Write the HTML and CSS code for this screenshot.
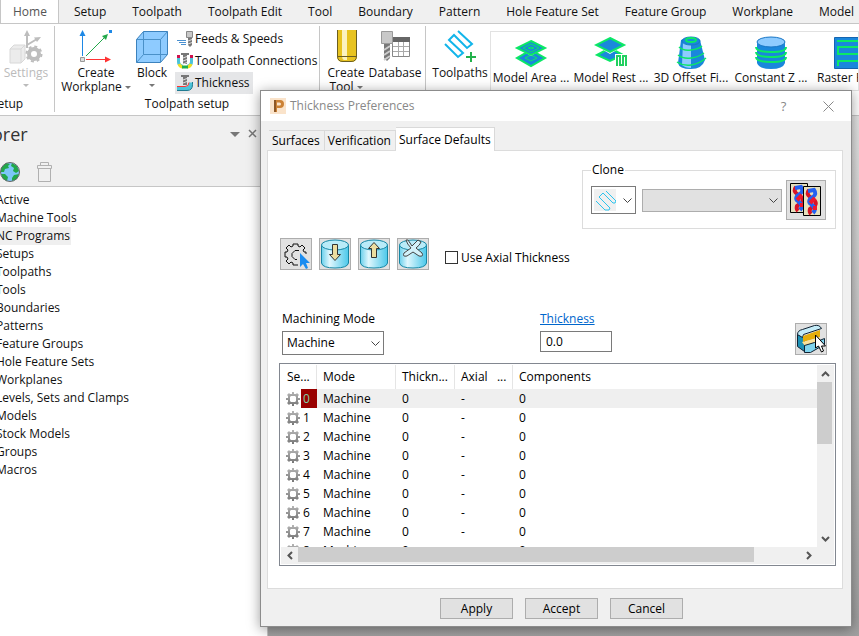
FILE: index.html
```html
<!DOCTYPE html>
<html lang="en">
<head>
    <meta charset="UTF-8">
    <meta name="viewport" content="width=device-width, initial-scale=1.0">
    <title>Thickness Preferences</title>
    <link rel="stylesheet" href="styles.css">
</head>
<body>
    <nav class="ribbon-tabs">
        <button class="ribbon-tab active">Home</button>
        <button class="ribbon-tab">Setup</button>
        <button class="ribbon-tab">Toolpath</button>
        <button class="ribbon-tab">Toolpath Edit</button>
        <button class="ribbon-tab">Tool</button>
        <button class="ribbon-tab">Boundary</button>
        <button class="ribbon-tab">Pattern</button>
        <button class="ribbon-tab">Hole Feature Set</button>
        <button class="ribbon-tab">Feature Group</button>
        <button class="ribbon-tab">Workplane</button>
        <button class="ribbon-tab">Model</button>
    </nav>

    <div class="ribbon">
        <section class="group group-settings">
            <div class="group-tools">
                <button class="tool" disabled>
                    <svg width="34" height="34" viewBox="0 0 34 34">
                        <path d="M1 19l4-4h11v14l-4 4H1z" fill="#ececec" stroke="#d8d8d8"/>
                        <path d="M1 19h11v14M12 19l4-4" fill="none" stroke="#d8d8d8"/>
                        <path d="M18 18V4M18 15l10-6" stroke="#bdbdbd" stroke-width="2" fill="none"/>
                        <path d="M18 0l3 6h-6zM32 7l-7 .5 3 4.500z" fill="#bdbdbd"/>
                        <circle cx="25" cy="24" r="5" fill="none" stroke="#bdbdbd" stroke-width="4"/>
                        <circle cx="25" cy="24" r="7.500" fill="none" stroke="#bdbdbd" stroke-width="2" stroke-dasharray="3 2.900"/>
                    </svg>
                    <span>Settings</span>
                    <i class="arrow"></i>
                </button>
            </div>
            <h2>Setup</h2>
        </section>

        <section class="group group-toolpath">
            <div class="group-tools">
                <button class="tool tool-workplane">
                    <svg width="34" height="34" viewBox="0 0 34 34">
                        <path d="M3.500 26V5" stroke="#1e88e5" fill="none"/>
                        <path d="M3.500 0l3 6h-6z" fill="#1e88e5"/>
                        <path d="M7 29.500h20" stroke="#f33" fill="none"/>
                        <path d="M32 29.500l-6-3v6z" fill="#f33"/>
                        <path d="M7 26L26 7" stroke="#22a84a" fill="none"/>
                        <path d="M29 4l-6 2 4 4z" fill="#22a84a"/>
                        <path d="M30 0h3v3h-3z" fill="#1e88e5"/>
                        <path d="M1.500 27.500h4v4h-4z" fill="#ddd" stroke="#999"/>
                    </svg>
                    <span>Create<br>Workplane <i class="arrow"></i></span>
                </button>
                <button class="tool tool-block">
                    <svg width="34" height="34" viewBox="0 0 34 34">
                        <path d="M1.500 9.500l7-8h24v23l-7 8h-24z" fill="#8ecbff" stroke="#3c82bd"/>
                        <path d="M1.500 9.500h24l7-8M25.500 9.500v23M8.500 1.500v23h24M8.500 24.500l-7 8" fill="none" stroke="#4a90c8"/>
                    </svg>
                    <span>Block</span>
                    <i class="arrow"></i>
                </button>
                <div class="small-tools">
                    <button class="small-tool">
                        <svg width="16" height="16" viewBox="0 0 16 16">
                            <path d="M9.500.500h6v6h-6z" fill="#c8c8c8" stroke="#888"/>
                            <path d="M11 7h4v7l-2 2-2-2z" fill="#777"/>
                            <path d="M11 10l4-1.500M11 13l4-1.500" stroke="#ddd"/>
                            <path d="M0 9.500h9M2 11.500h7M4 13.500h5" stroke="#4a90d0" fill="none"/>
                        </svg>
                        Feeds &amp; Speeds
                    </button>
                    <button class="small-tool">
                        <svg width="16" height="16" viewBox="0 0 16 16">
                            <path d="M1.500 5v4q0 3 4 4.500M14.500 5v4q0 3-4 4.500" fill="none" stroke="#4cc3d9" stroke-width="3"/>
                            <path d="M2 11q1 3 4 3M14 11q-1 3-4 3" fill="none" stroke="#f0e020" stroke-width="3"/>
                            <path d="M5 12.500h6v3H5z" fill="#21b04b"/>
                            <path d="M0 2h3v3H0zM13 2h3v3h-3z" fill="#d0104c"/>
                            <path d="M4 0h8v2h-2v9H6V2H4z" fill="#777"/>
                            <path d="M6 5l4-1.500M6 8l4-1.500M6 11l4-1.500" stroke="#ddd"/>
                        </svg>
                        Toolpath Connections
                    </button>
                    <button class="small-tool selected">
                        <svg width="16" height="16" viewBox="0 0 16 16">
                            <path d="M0 13.500h9q5 0 5-6" fill="none" stroke="#4cc3d9" stroke-width="4"/>
                            <path d="M0 15.500h10q5.500 0 5.500-6V7" fill="none" stroke="#207a90"/>
                            <path d="M0 11.500h8q4 0 4-4" fill="none" stroke="#f33"/>
                            <path d="M4 0h8v2h-2v8H6V2H4z" fill="#777"/>
                            <path d="M6 5l4-1.500M6 8l4-1.500" stroke="#ddd"/>
                        </svg>
                        Thickness
                    </button>
                </div>
            </div>
            <h2>Toolpath setup</h2>
        </section>

        <section class="group group-tool">
            <div class="group-tools">
                <button class="tool tool-create">
                    <svg width="34" height="34" viewBox="0 0 34 34">
                        <path d="M8 0v26q0 6 6 6h8q6 0 6-6V0z" fill="#e8c320"/>
                        <path d="M13 0h5v30h-3q-2-1-2-4z" fill="#fbf2c0"/>
                        <path d="M8.500 0v26q0 5.500 5.500 5.500h8q5.500 0 5.500-5.500V0M9 26.500h19" fill="none" stroke="#6b5e20"/>
                    </svg>
                    <span>Create<br>Tool <i class="arrow"></i></span>
                </button>
                <button class="tool tool-database">
                    <svg width="34" height="34" viewBox="0 0 34 34">
                        <path d="M14.500 7.500h17v19h-17z" fill="#fff" stroke="#888"/>
                        <path d="M14 7h18v5H14z" fill="#666"/>
                        <path d="M15 16.500h16M15 21.500h16M20.500 12v14M25.500 12v14" stroke="#aaa" fill="none"/>
                        <path d="M3.500 1.500h11v12h-11z" fill="#c8c8c8" stroke="#999"/>
                        <path d="M6 14h6v14l-3 3-3-3z" fill="#777"/>
                        <path d="M6 20l6-4M6 25l6-4M6 30l6-4" stroke="#ccc" stroke-width="2"/>
                    </svg>
                    <span>Database</span>
                </button>
            </div>
        </section>

        <section class="group group-gallery">
            <div class="group-tools">
                <button class="tool tool-toolpaths">
                    <svg width="34" height="34" viewBox="0 0 34 34">
                        <path d="M2 14l13 13 5-4L6 10l5-5 13 13 5-4L15 1" fill="none" stroke="#12b5ea" stroke-width="2"/>
                        <path d="M28 22v10M23 27h10" stroke="#22b14c" stroke-width="2" fill="none"/>
                    </svg>
                    <span>Toolpaths</span>
                </button>
                <div class="gallery">
                    <button class="gallery-item">
                        <svg width="34" height="34" viewBox="0 0 34 34">
                            <path d="M17 14l14 8-14 8-14-8z" fill="#1a87dc" stroke="#0be866" stroke-width="2"/>
                            <path d="M17 19l6 3-6 3-6-3z" fill="none" stroke="#0be866"/>
                            <path d="M17 3l15 8-15 9-15-9z" fill="#fff"/>
                            <path d="M17 5l14 7-14 7-14-7z" fill="#1a87dc" stroke="#0be866" stroke-width="2"/>
                            <path d="M17 8l8 4-8 4-8-4zM17 11l3 1-3 1-3-1z" fill="none" stroke="#0be866"/>
                        </svg>
                        Model Area ...
                    </button>
                    <button class="gallery-item">
                        <svg width="34" height="34" viewBox="0 0 34 34">
                            <path d="M16 12l13 7-13 6-13-6z" fill="#1a87dc" stroke="#0be866" stroke-width="2"/>
                            <path d="M16 1l15 8-15 9-15-9z" fill="#fff"/>
                            <path d="M16 2l14 7-14 7-14-7z" fill="#1a87dc" stroke="#0be866" stroke-width="2"/>
                            <path d="M21 18h12v12H21z" fill="#fff"/>
                            <path d="M23 30V20h3v9h3v-9h3v10" fill="none" stroke="#22d060" stroke-width="2"/>
                        </svg>
                        Model Rest ...
                    </button>
                    <button class="gallery-item">
                        <svg width="34" height="34" viewBox="0 0 34 34">
                            <path d="M7 4q9-5 19 0l5 20q-3 9-14 9-12 0-13-6z" fill="#1a87dc"/>
                            <path d="M9 6h8v26q-6 0-9-3z" fill="#8ecbff"/>
                            <ellipse cx="17" cy="5" rx="9" ry="4" fill="#1a87dc" stroke="#1976c5"/>
                            <ellipse cx="17" cy="4" rx="5" ry="2" fill="none" stroke="#0be866" stroke-width="2"/>
                            <path d="M5 11q4 4 12 3t11-4M4 19q5 4 13 3t13-5M3 26q6 4 14 3t15-7" fill="none" stroke="#0be866" stroke-width="1.500"/>
                        </svg>
                        3D Offset Fi...
                    </button>
                    <button class="gallery-item">
                        <svg width="34" height="34" viewBox="0 0 34 34">
                            <path d="M3 6v21q2 6 14 6t14-6V6z" fill="#1a87dc"/>
                            <ellipse cx="17" cy="6" rx="14" ry="5" fill="#8ecbff" stroke="#1976c5"/>
                            <path d="M2 11q0 5 15 5t15-5M2 16q0 5 15 5t15-5M2 21q0 5 15 5t15-5" fill="none" stroke="#0be866" stroke-width="2"/>
                        </svg>
                        Constant Z ...
                    </button>
                    <button class="gallery-item">
                        <svg width="34" height="34" viewBox="0 0 34 34">
                            <path d="M.500 1.500h33v31H.500z" fill="#1a87dc" stroke="#1565b0"/>
                            <path d="M3 5h28v6H4v7h27v7H4v5" fill="none" stroke="#0be866" stroke-width="2"/>
                        </svg>
                        Raster Fini...
                    </button>
                </div>
            </div>
        </section>
    </div>

    <main class="workspace">
        <aside class="explorer">
            <header class="explorer-header">
                <h1>Explorer</h1>
                <button class="icon-button" aria-label="Panel menu"><i class="arrow large"></i></button>
                <button class="icon-button" aria-label="Close panel">
                    <svg width="9" height="9" viewBox="0 0 9 9"><path d="M1 1l7 7M8 1L1 8" stroke="#777" stroke-width="1.500"/></svg>
                </button>
            </header>
            <div class="explorer-tools">
                <button class="icon-button" aria-label="World">
                    <svg width="20" height="20" viewBox="0 0 20 20">
                        <circle cx="10" cy="10" r="9.500" fill="#7cc6f8"/>
                        <path d="M1 6l5-5 4 1-2 2 1 2-4 1-1 3-3 0zM12 1l5 3 2 5-3 2-3-2 1-3-3-2zM1 12l4 0 3 3-1 4-4-2zM14 13l5-1-2 5-5 2 0-3z" fill="#21a84a"/>
                        <circle cx="10" cy="10" r="9.500" fill="none" stroke="#666"/>
                    </svg>
                </button>
                <button class="icon-button" aria-label="Delete">
                    <svg width="16" height="20" viewBox="0 0 16 20">
                        <path d="M1.500 6.500h12v13h-12zM.500 3.500h14v3H.500zM3.500.500h8v3h-8z" fill="none" stroke="#b0b0b0"/>
                    </svg>
                </button>
            </div>
            <ul class="tree">
                <li><span>Active</span></li>
                <li><span>Machine Tools</span></li>
                <li><span class="selected">NC Programs</span></li>
                <li><span>Setups</span></li>
                <li><span>Toolpaths</span></li>
                <li><span>Tools</span></li>
                <li><span>Boundaries</span></li>
                <li><span>Patterns</span></li>
                <li><span>Feature Groups</span></li>
                <li><span>Hole Feature Sets</span></li>
                <li><span>Workplanes</span></li>
                <li><span>Levels, Sets and Clamps</span></li>
                <li><span>Models</span></li>
                <li><span>Stock Models</span></li>
                <li><span>Groups</span></li>
                <li><span>Macros</span></li>
            </ul>
        </aside>
        <div class="viewport"></div>
    </main>

    <div class="dialog" role="dialog" aria-labelledby="dialog-title">
        <header class="dialog-title">
            <svg width="16" height="16" viewBox="0 0 16 16">
                <path d="M0 0h16v16H0z" fill="#fae3ca"/>
                <path d="M4 2h6q4 0 4 4t-4 4H7v4H4zM7 4.500v3h2.500q1.500 0 1.500-1.500T9.500 4.500z" fill="#cc8235" fill-rule="evenodd"/>
                <path d="M4 2h2v12H4z" fill="#8d5725"/>
            </svg>
            <h2 id="dialog-title">Thickness Preferences</h2>
            <button class="title-button" aria-label="Help">?</button>
            <button class="title-button" aria-label="Close">
                <svg width="11" height="11" viewBox="0 0 11 11"><path d="M.500.500l10 10M10.500.500l-10 10" stroke="#888"/></svg>
            </button>
        </header>

        <div class="dialog-tabs">
            <button class="dialog-tab">Surfaces</button>
            <button class="dialog-tab">Verification</button>
            <button class="dialog-tab active">Surface Defaults</button>
        </div>

        <div class="panel">
            <fieldset class="clone">
                <legend>Clone</legend>
                <div class="select select-type">
                    <select aria-label="Clone type"><option></option></select>
                    <svg class="type-icon" width="22" height="22" viewBox="0 0 22 22">
                        <path d="M0 0h22v22H0z" fill="#f0f0f0"/>
                        <path d="M2 12l9 9h4l1-2L5 8l4-4 10 10h2l1-2L12 2" fill="none" stroke="#2cc4ee"/>
                    </svg>
                    <svg class="chevron" width="9" height="5" viewBox="0 0 9 5"><path d="M.500.500l4 4 4-4" fill="none" stroke="#444"/></svg>
                </div>
                <div class="select select-source">
                    <select aria-label="Clone source" disabled><option></option></select>
                    <svg class="chevron" width="9" height="5" viewBox="0 0 9 5"><path d="M.500.500l4 4 4-4" fill="none" stroke="#444"/></svg>
                </div>
                <button class="square-button large" aria-label="Copy thickness">
                    <svg width="32" height="34" viewBox="0 0 32 34">
                        <path d="M.500.500h17v29h-17z" fill="#e6e0bd" stroke="#000"/>
                        <use href="#helix"/>
                        <path d="M13.500 3.500h17v29h-17z" fill="#e6e0bd" stroke="#000"/>
                        <use href="#helix" x="13" y="3"/>
                    </svg>
                </button>
            </fieldset>

            <div class="toolbar">
                <button class="square-button" aria-label="Select components">
                    <svg width="30" height="30" viewBox="0 0 30 30">
                        <path d="M12 7V5h5v2l2 1 2-2 3 3-2 2 1 2h2v2M12 7l-2 1-2-2-3 3 2 2-1 2H4v5h2l1 2-2 2 3 3 2-2 2 1v2h5" fill="none" stroke="#111"/>
                        <path d="M18 11.500h-4l-3 3v3l3 3h2" fill="none" stroke="#111"/>
                        <path d="M19 14v14l3-3 3 5 2-1-2-5h4z" fill="#1a8cf0"/>
                    </svg>
                </button>
                <button class="square-button" aria-label="Acquire components">
                    <svg width="30" height="30" viewBox="0 0 30 30">
                        <use href="#cylinder"/>
                        <path d="M12.500 5.500h5v10h3l-5.500 6-5.500-6h3z" fill="#ecdda0" stroke="#333"/>
                    </svg>
                </button>
                <button class="square-button" aria-label="Show components">
                    <svg width="30" height="30" viewBox="0 0 30 30">
                        <use href="#cylinder"/>
                        <path d="M12.500 18.500h5v-9h3L15 3.500l-5.500 6h3z" fill="#ecdda0" stroke="#333"/>
                    </svg>
                </button>
                <button class="square-button" aria-label="Remove components">
                    <svg width="30" height="30" viewBox="0 0 30 30">
                        <use href="#cylinder"/>
                        <path d="M8 1q1 4 5 8l-7 5q-2 4 3 3l6-4 6 4q5 1 3-3l-6-5q4-3 5-6l-3-2-6 6-4-6z" fill="#d3f1f9" stroke="#444"/>
                    </svg>
                </button>
                <label class="check"><input type="checkbox"> Use Axial Thickness</label>
            </div>

            <div class="fields">
                <div class="field field-mode">
                    <label for="mode">Machining Mode</label>
                    <div class="select">
                        <select id="mode"><option>Machine</option></select>
                        <svg class="chevron" width="9" height="5" viewBox="0 0 9 5"><path d="M.500.500l4 4 4-4" fill="none" stroke="#444"/></svg>
                    </div>
                </div>
                <div class="field field-thickness">
                    <a href="#thickness">Thickness</a>
                    <input type="text" id="thickness" value="0.0" aria-label="Thickness">
                </div>
                <button class="square-button" aria-label="Pick surfaces">
                    <svg width="30" height="30" viewBox="0 0 30 30">
                        <path d="M1.500 10.500l7 3v14l-7-5z" fill="#1d91b5" stroke="#123"/>
                        <path d="M1.500 10.500q0-4 5-5l12-4q5-1 7 3l-18 6-1 3z" fill="#c4ecf8" stroke="#123"/>
                        <path d="M7 12l17-6v7l-17 5z" fill="#e5ad0b"/>
                        <path d="M6 18l18-4v5l-15 3z" fill="#fbe29a"/>
                        <path d="M8.500 21.500l10-3 10-4v6l-14 8h-6z" fill="#7fd4ee" stroke="#123"/>
                        <path d="M19.500 11v13l3-2 3 6 2-1-2-5h4z" fill="#fff" stroke="#000"/>
                    </svg>
                </button>
            </div>

            <div class="list">
                <div class="list-view">
                    <table>
                        <colgroup>
                            <col class="col-set"><col class="col-mode"><col class="col-thickness"><col class="col-axial"><col>
                        </colgroup>
                        <thead>
                            <tr><th>Se...</th><th>Mode</th><th>Thickn...</th><th>Axial&nbsp; &nbsp;...</th><th>Components</th></tr>
                        </thead>
                        <tbody id="rows"></tbody>
                    </table>
                </div>
                <div class="scroll-y">
                    <button aria-label="Scroll up"><svg width="9" height="6" viewBox="0 0 9 6"><path d="M1 5l3.500-3.500L8 5" fill="none" stroke="#555" stroke-width="2"/></svg></button>
                    <div class="thumb"></div>
                    <button aria-label="Scroll down"><svg width="9" height="6" viewBox="0 0 9 6"><path d="M1 1l3.500 3.500L8 1" fill="none" stroke="#555" stroke-width="2"/></svg></button>
                </div>
                <div class="scroll-x">
                    <button aria-label="Scroll left"><svg width="6" height="9" viewBox="0 0 6 9"><path d="M5 1L1.500 4.500 5 8" fill="none" stroke="#555" stroke-width="2"/></svg></button>
                    <div class="thumb"></div>
                    <button aria-label="Scroll right"><svg width="6" height="9" viewBox="0 0 6 9"><path d="M1 1l3.500 3.500L1 8" fill="none" stroke="#555" stroke-width="2"/></svg></button>
                </div>
            </div>
        </div>

        <footer class="dialog-buttons">
            <button>Apply</button>
            <button>Accept</button>
            <button>Cancel</button>
        </footer>
    </div>

    <!-- shapes used by several icons -->
    <svg class="defs" width="0" height="0">
        <linearGradient id="cyl-fill">
            <stop offset="0" stop-color="#6bd0ec"/>
            <stop offset=".3" stop-color="#e0f7fd"/>
            <stop offset="1" stop-color="#4cc8ea"/>
        </linearGradient>
        <linearGradient id="gear-fill" x2="0" y2="1">
            <stop offset="0" stop-color="#b5b5b5"/>
            <stop offset="1" stop-color="#777"/>
        </linearGradient>
        <g id="cylinder">
            <path d="M1.500 6v18q1 5 13.500 5t13.500-5V6z" fill="url(#cyl-fill)" stroke="#1687a5"/>
            <ellipse cx="15" cy="6" rx="13.500" ry="5" fill="#b9ebf8" stroke="#1687a5"/>
        </g>
        <g id="helix" fill="none" stroke-width="4">
            <path d="M6 4q-3 4 1 7l5 4q2 3-1 5l-4 3q-1 3 1 5" stroke="#d81426"/>
            <path d="M5 5l6-1q3 4-1 7l-3 2q-2 3 1 5l3 3q2 3-1 6" stroke="#2461f2"/>
            <path d="M12 12l-5 5M12 20v4" stroke="#f01830"/>
        </g>
        <path id="gear" d="M6 0h2v2h2l1-1 2 2-1 1v2h2v2h-2v2l1 1-2 2-1-1H8v2H6v-2H4l-1 1-2-2 1-1V8H0V6h2V4L1 3l2-2 1 1h2zM5 4L4 5v4l1 1h4l1-1V5L9 4z" fill="url(#gear-fill)" fill-rule="evenodd"/>
    </svg>

    <script>
        const rows = document.getElementById("rows");

        for (let i = 0; i < 9; i++) {
            const row = document.createElement("tr");
            row.innerHTML = `<td><div class="set"><svg width="14" height="14" viewBox="0 0 14 14"><use href="#gear"/></svg><span>${i}</span></div></td>
                <td>Machine</td><td>0</td><td>-</td><td>0</td>`;
            rows.appendChild(row);
        }
        rows.firstElementChild.classList.add("current");
    </script>
</body>
</html>
```
FILE: styles.css
```css
* {
    box-sizing: border-box;
}
body {
    margin: 0;
    height: 100vh;
    overflow: hidden;
    display: flex;
    flex-direction: column;
    position: relative;
    background: #fff;
    color: #111;
    font-family: "Open Sans", "Noto Sans", sans-serif;
    font-size: 12px;
    line-height: 16px;
}
button, input, select {
    font: inherit;
    color: inherit;
    margin: 0;
    padding: 0;
}
button {
    border: 0;
    background: none;
    white-space: nowrap;
}
h1, h2 {
    margin: 0;
    font-size: 12px;
    font-weight: normal;
}
svg {
    display: block;
    flex: none;
}
.defs {
    position: absolute;
}

/* Ribbon */
.ribbon-tabs {
    display: flex;
    flex: none;
    height: 24px;
    background: #f0f0f0;
    border-bottom: 1px solid #c6c6c6;
    overflow: hidden;
}
.ribbon-tab {
    flex: none;
    height: 23px;
    padding: 0 13px;
}
.ribbon-tab.active {
    height: 24px;
    margin-right: 2px;
    padding: 0 11px 1px 12px;
    background: #fff;
    border: 1px solid #c6c6c6;
    border-width: 0 1px;
    color: #555;
}
.ribbon {
    display: flex;
    flex: none;
    height: 92px;
    padding-top: 2px;
    border-bottom: 1px solid #c6c6c6;
    overflow: hidden;
}
.group {
    display: flex;
    flex: none;
    flex-direction: column;
    height: 86px;
    border-right: 1px solid #c6c6c6;
}
.group h2 {
    text-align: center;
}
.group-tools {
    display: flex;
    height: 70px;
    padding-top: 4px;
}
.group-settings {
    width: 55px;
}
.group-settings h2 {
    margin-left: -40px;
}
.group-toolpath {
    width: 265px;
    padding-left: 8px;
}
.group-toolpath h2 {
    margin-left: -8px;
}
.group-tool {
    width: 106px;
    padding-left: 2px;
}
.group-gallery {
    flex: 1;
    min-width: 0;
    border: 0;
    padding-left: 4px;
}
.tool {
    display: flex;
    flex: none;
    flex-direction: column;
    align-items: center;
    line-height: 14px;
    width: 52px;
}
.tool svg {
    margin-bottom: 2px;
}
.tool:disabled {
    color: #bbb;
}
.tool-workplane {
    width: 66px;
}
.tool-block {
    width: 46px;
}
.tool-create {
    width: 48px;
}
.tool-database {
    width: 50px;
}
.tool-toolpaths {
    width: 60px;
}
.arrow {
    display: inline-block;
    border: 3px solid transparent;
    border-top-color: #777;
    border-bottom: 0;
    vertical-align: middle;
}
.tool > .arrow {
    margin-top: 4px;
}
.tool:disabled .arrow {
    border-top-color: #bbb;
}
.arrow.large {
    border-width: 5px 5px 0;
}
.small-tools {
    display: flex;
    flex-direction: column;
    align-items: flex-start;
    margin-top: -2px;
}
.small-tool {
    display: flex;
    align-items: center;
    gap: 2px;
    height: 22px;
    padding: 0 3px 0 2px;
}
.small-tool.selected {
    background: #e5e6e8;
}
.gallery {
    display: flex;
    flex: 1;
    height: 60px;
    margin-top: 1px;
    border: 1px solid #e2e2e2;
    overflow: hidden;
}
.gallery-item {
    display: flex;
    flex: none;
    flex-direction: column;
    align-items: center;
    width: 80px;
    padding-top: 4px;
}

/* Explorer */
.workspace {
    display: flex;
    flex: 1;
    min-height: 0;
}
.explorer {
    width: 316px;
    margin-left: -48px;
    flex: none;
    background: #fff;
    border-right: 1px solid #c6c6c6;
}
.explorer-header {
    display: flex;
    align-items: center;
    gap: 8px;
    height: 35px;
    padding: 0 10px 0 5px;
    background: #f0f0f0;
}
.explorer-header h1 {
    flex: 1;
    font-size: 18px;
    color: #333;
}
.explorer-tools {
    display: flex;
    align-items: center;
    gap: 17px;
    height: 36px;
    padding: 6px 0 0 48px;
    background: #f0f0f0;
    border-bottom: 1px solid #c6c6c6;
}
.tree {
    margin: 0;
    padding: 4px 0 0 44px;
    list-style: none;
}
.tree li {
    height: 18px;
    line-height: 18px;
}
.tree span {
    display: inline-block;
    padding-right: 1px;
}
.tree .selected {
    background: #efefef;
}
.viewport {
    flex: 1;
    background: linear-gradient(#e4e4e4, #a0a0a0);
}

/* Dialog */
.dialog {
    position: absolute;
    top: 90px;
    left: 260px;
    right: 7px;
    background: #f0f0f0;
    border: 1px solid #8c8c8c;
    box-shadow: 0 2px 12px rgba(0, 0, 0, 0.4);
}
.dialog-title {
    display: flex;
    align-items: center;
    height: 30px;
    padding-left: 9px;
    background: #fff;
    color: #888;
}
.dialog-title h2 {
    flex: 1;
    margin-left: 4px;
}
.title-button {
    display: flex;
    align-items: center;
    justify-content: center;
    width: 45px;
    font-size: 13px;
}
.dialog-tabs {
    display: flex;
    align-items: flex-end;
    height: 29px;
    padding-left: 8px;
}
.dialog-tab {
    height: 20px;
    padding: 0 4px 0 3px;
    border: 1px solid #d9d9d9;
    border-width: 1px 1px 0 0;
    color: #000;
}
.dialog-tab.active {
    position: relative;
    height: 24px;
    margin-bottom: -1px;
    padding: 0 3px;
    background: #fff;
    border-left-width: 0;
}
.panel {
    margin: 0 8px 9px 6px;
    padding: 11px 6px 22px 11px;
    background: #fff;
    border: 1px solid #dcdcdc;
    color: #000;
}
.clone {
    display: flex;
    align-items: center;
    gap: 4px;
    width: 254px;
    height: 67px;
    margin: 0 0 9px auto;
    padding: 0 9px 0 8px;
    border: 1px solid #dcdcdc;
}
.clone legend {
    margin-bottom: -6px;
    padding: 0 1px;
}
.select {
    position: relative;
}
.select select {
    display: block;
    width: 100%;
    height: 100%;
    padding: 0 4px;
    appearance: none;
    background: #fff;
    border: 1px solid #7a7a7a;
    border-radius: 0;
}
.select select:disabled {
    background: #e1e1e1;
    border-color: #adadad;
    opacity: 1;
}
.chevron {
    position: absolute;
    top: 50%;
    right: 4px;
    margin-top: -2px;
}
.select-type {
    width: 45px;
    height: 28px;
    margin-right: 2px;
}
.type-icon {
    position: absolute;
    top: 3px;
    left: 3px;
}
.select-source {
    flex: 1;
    height: 23px;
}
.square-button {
    display: flex;
    flex: none;
    align-items: center;
    justify-content: center;
    width: 32px;
    height: 32px;
    background: #e1e1e1;
    border: 1px solid #adadad;
}
.square-button.large {
    width: 40px;
    height: 40px;
}
.toolbar {
    display: flex;
    align-items: center;
    gap: 7px;
    padding-left: 1px;
}
.check {
    display: flex;
    align-items: center;
    gap: 3px;
    margin: 7px 0 0 9px;
}
.check input {
    width: 13px;
    height: 13px;
    appearance: none;
    background: #fff;
    border: 1px solid #333;
}
.fields {
    display: flex;
    align-items: flex-end;
    margin-top: 41px;
    padding: 0 9px 8px 3px;
}
.field {
    display: flex;
    flex-direction: column;
    gap: 4px;
}
.field a {
    color: #0066cc;
}
.field-mode {
    width: 102px;
    margin-right: 156px;
    white-space: nowrap;
}
.field-mode .select {
    height: 24px;
}
.field-thickness {
    width: 72px;
    padding-bottom: 3px;
}
.field-thickness input {
    width: 100%;
    height: 21px;
    padding: 0 5px;
    border: 1px solid #7a7a7a;
}
.fields .square-button {
    margin-left: auto;
}

/* Surface list */
.list {
    display: grid;
    grid-template: 182px 17px / 1fr 17px;
    padding: 1px;
    border: 1px solid #828790;
}
.list-view {
    overflow: hidden;
}
.list table {
    width: 100%;
    table-layout: fixed;
    border-collapse: separate;
    border-spacing: 0;
}
.col-set {
    width: 36px;
}
.col-mode {
    width: 79px;
}
.col-thickness {
    width: 59px;
}
.col-axial {
    width: 58px;
}
.list th {
    height: 24px;
    padding: 0 0 0 6px;
    border-right: 1px solid #e5e5e5;
    font-weight: normal;
    text-align: left;
    white-space: nowrap;
}
.list th:last-child {
    border: 0;
}
.list td {
    height: 19px;
    padding: 0 0 0 6px;
    line-height: 19px;
}
.list td:first-child {
    padding: 0 0 0 5px;
    background: #fff;
}
.set {
    display: flex;
    align-items: center;
    gap: 1px;
}
.set span {
    flex: 1;
    padding-left: 2px;
}
.current {
    background: #efefef;
}
.current .set span {
    background: #990000;
    color: #7fd0a8;
}
.scroll-x, .scroll-y {
    display: flex;
    background: #f0f0f0;
}
.scroll-y {
    flex-direction: column;
    grid-row: 1;
    grid-column: 2;
}
.scroll-x {
    grid-column: 1 / 3;
    padding-right: 17px;
}
.list .scroll-x button, .list .scroll-y button {
    display: flex;
    flex: none;
    align-items: center;
    justify-content: center;
    width: 17px;
    height: 17px;
}
.thumb {
    background: #cdcdcd;
}
.scroll-y .thumb {
    width: 15px;
    height: 62px;
    margin-bottom: auto;
}
.scroll-x .thumb {
    width: 85%;
    height: 15px;
    margin-right: auto;
}

.dialog-buttons {
    display: flex;
    justify-content: center;
    gap: 12px;
    padding: 0 0 7px 11px;
}
.dialog-buttons button {
    width: 73px;
    height: 21px;
    background: #e1e1e1;
    border: 1px solid #adadad;
    color: #000;
}
```
